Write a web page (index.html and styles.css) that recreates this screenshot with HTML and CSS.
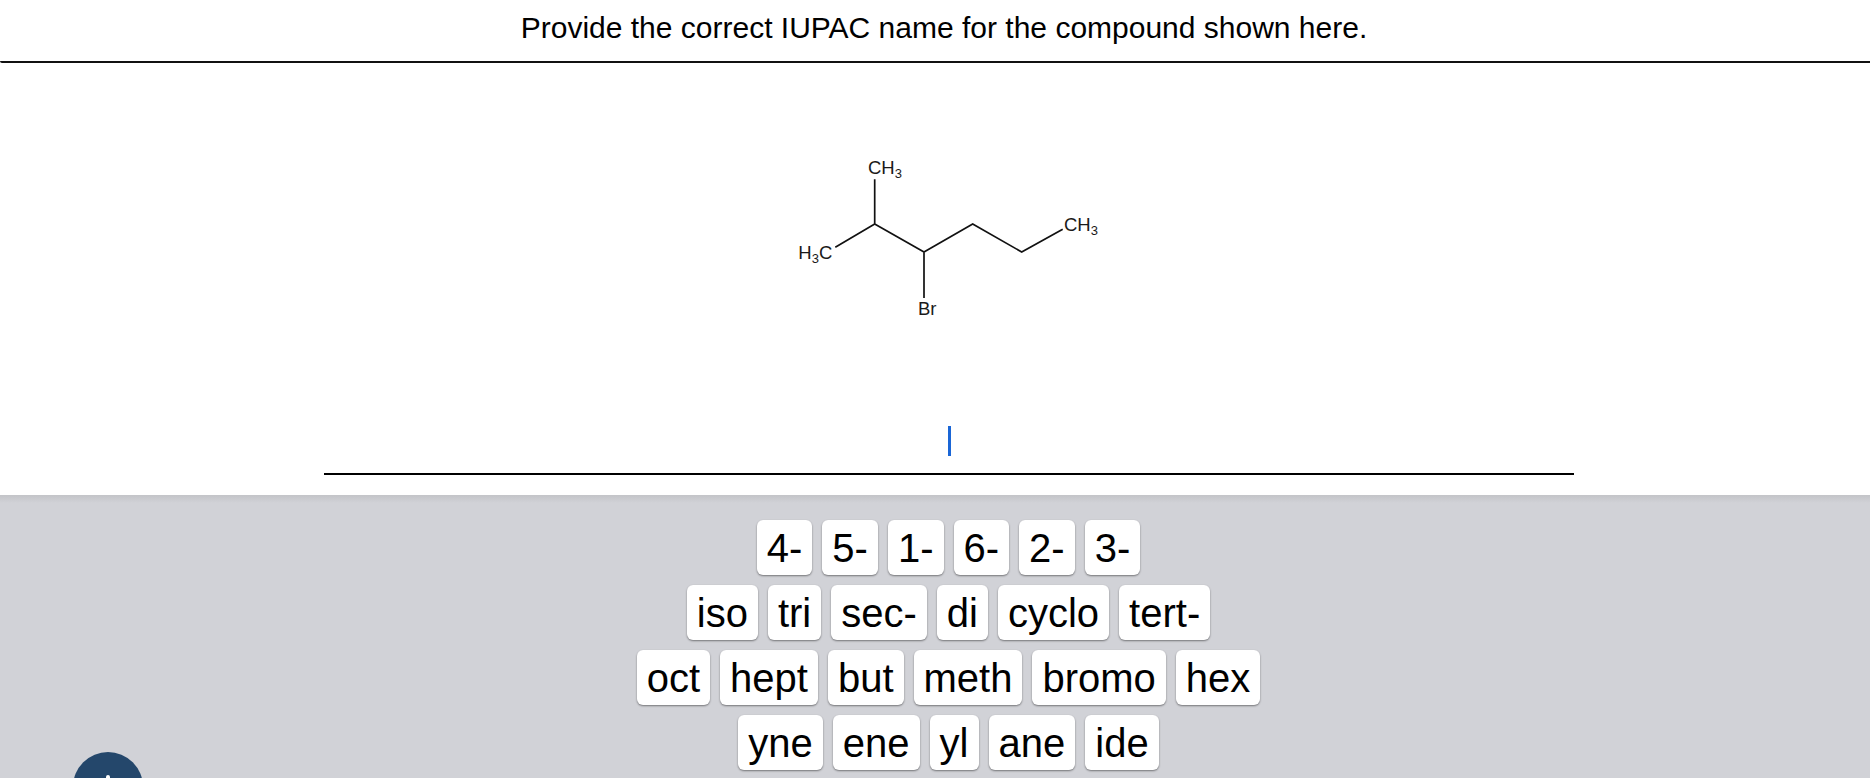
FILE: index.html
```html
<!DOCTYPE html>
<html lang="en">
<head>
<meta charset="utf-8">
<title>IUPAC name question</title>
<link rel="stylesheet" href="styles.css">
</head>
<body>
<div class="page">
  <header class="prompt">Provide the correct IUPAC name for the compound shown here.</header>
  <main class="work">
    <div class="figure">
      <svg class="molecule" width="380" height="200" viewBox="0 0 380 200" role="img" aria-label="3-bromo-2-methylhexane">
        <g class="bonds">
          <path d="M114.7 39.3V84L75.3 107.3M114.7 84L164 112L212.7 84L261.7 112L302.7 89.3M164 112V158"/>
        </g>
        <text class="atom" x="108" y="34">CH<tspan class="sub" dy="3.5">3</tspan></text>
        <text class="atom" x="38.3" y="119.3">H<tspan class="sub" dy="3.5">3</tspan><tspan dy="-3.5">C</tspan></text>
        <text class="atom" x="304" y="91">CH<tspan class="sub" dy="3.5">3</tspan></text>
        <text class="atom" x="158" y="175">Br</text>
      </svg>
    </div>
    <div class="answer"><span class="caret"></span></div>
  </main>
  <section class="keyboard">
    <div class="key-row">
      <button class="key">4-</button><button class="key">5-</button><button class="key">1-</button><button class="key">6-</button><button class="key">2-</button><button class="key">3-</button>
    </div>
    <div class="key-row">
      <button class="key">iso</button><button class="key">tri</button><button class="key">sec-</button><button class="key">di</button><button class="key">cyclo</button><button class="key">tert-</button>
    </div>
    <div class="key-row">
      <button class="key">oct</button><button class="key">hept</button><button class="key">but</button><button class="key">meth</button><button class="key">bromo</button><button class="key">hex</button>
    </div>
    <div class="key-row">
      <button class="key">yne</button><button class="key">ene</button><button class="key">yl</button><button class="key">ane</button><button class="key">ide</button>
    </div>
  </section>
  <button class="fab" aria-label="Add">
    <svg width="70" height="70" viewBox="0 0 70 70"><path d="M35 25V45M25 35H45"/></svg>
  </button>
</div>
</body>
</html>
```
FILE: styles.css
```css
* { box-sizing: border-box; }
html, body { margin: 0; padding: 0; }
body { font-family: "Liberation Sans", Arial, sans-serif; color: #000; background: #fff; }
.page { position: relative; width: 1870px; height: 778px; overflow: hidden; display: flex; flex-direction: column; }
.prompt { height: 63px; border-bottom: 2px solid #111; border-bottom-left-radius: 2px; padding: 8px 0 0 18px; font-size: 30px; line-height: 40px; text-align: center; }
.work { height: 432px; display: flex; flex-direction: column; }
.figure { height: 347px; padding: 77px 0 0 30px; display: flex; justify-content: center; align-items: flex-start; }
.molecule { display: block; }
.bonds path { fill: none; stroke: #111; stroke-width: 1.7; }
.atom { font-size: 18.5px; fill: #1a1a1a; }
.sub { font-size: 13px; }
.answer { margin: 0 0 0 324px; width: 1250px; height: 65px; border-bottom: 2px solid #000; display: flex; justify-content: center; }
.caret { display: block; width: 3px; height: 30px; margin-top: 16px; background: #1a66d6; }
.keyboard { flex: 1; background: linear-gradient(#c3c4c8, #d1d2d7 8px); padding: 25px 0 0 27px; display: flex; flex-direction: column; gap: 10px; }
.key-row { display: flex; justify-content: center; gap: 10px; }
.key { height: 55px; padding: 0 10px; border: 0; border-radius: 6px; background: #fff; color: #000; font: 40px/54px "Liberation Sans", Arial, sans-serif; box-shadow: 0 1px 2px rgba(0,0,0,.45); }
.fab { position: absolute; left: 73px; top: 752px; width: 70px; height: 70px; padding: 0; border: 0; border-radius: 50%; background: #24476b; display: block; }
.fab svg { display: block; }
.fab path { fill: none; stroke: #fff; stroke-width: 4; stroke-linecap: round; }
```
